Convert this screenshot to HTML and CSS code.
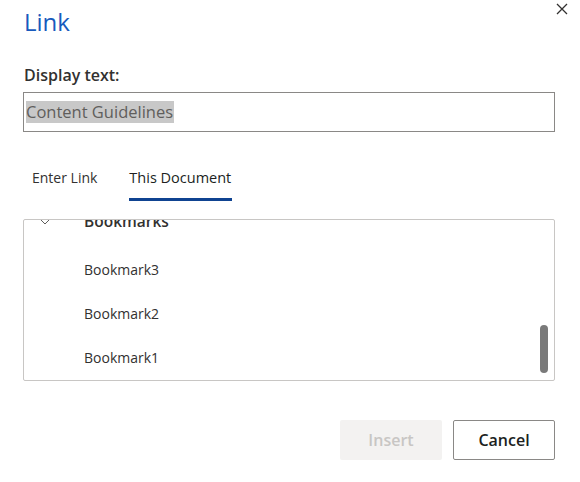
FILE: index.html
```html
<!DOCTYPE html>
<html>
<head>
<meta charset="utf-8">
<link rel="stylesheet" href="styles.css">
</head>
<body>
<div class="dialog">
  <div class="header">
    <h1 class="title">Link</h1>
    <button class="close" aria-label="Close">
      <svg width="12" height="12" viewBox="0 0 12 12"><path d="M1 1 L11 11 M11 1 L1 11" stroke="#323130" stroke-width="1.3" fill="none"/></svg>
    </button>
  </div>
  <label class="field-label">Display text:</label>
  <div class="input"><span class="selected">Content Guidelines</span></div>
  <div class="tabs">
    <div class="tab">Enter Link</div>
    <div class="tab active">This Document</div>
  </div>
  <div class="listbox">
    <div class="list">
      <div class="group-row">
        <svg class="chevron" width="10" height="6" viewBox="0 0 10 6"><path d="M0.5 0.5 L5 5 L9.5 0.5" stroke="#605e5c" stroke-width="1" fill="none"/></svg>
        <span class="group-name">Bookmarks</span>
      </div>
      <div class="item">Bookmark3</div>
      <div class="item">Bookmark2</div>
      <div class="item">Bookmark1</div>
    </div>
    <div class="thumb"></div>
  </div>
  <div class="actions">
    <button class="btn primary" disabled>Insert</button>
    <button class="btn secondary">Cancel</button>
  </div>
</div>
</body>
</html>
```
FILE: styles.css
```css
html, body {
  margin: 0;
  padding: 0;
  background: #ffffff;
}
body {
  width: 580px;
  height: 482px;
  overflow: hidden;
  font-family: "Open Sans", "Noto Sans", sans-serif;
  color: #323130;
}
.dialog {
  padding: 0 25px 0 23px;
  display: flex;
  flex-direction: column;
}
.header {
  display: flex;
  justify-content: space-between;
  align-items: flex-start;
}
.title {
  margin: 6px 0 0 1px;
  font-size: 24px;
  line-height: 32px;
  font-weight: 400;
  color: #185abd;
}
.close {
  margin: 3px -13px 0 0;
  padding: 0;
  border: 0;
  background: transparent;
  width: 12px;
  height: 12px;
  display: flex;
}
.field-label {
  margin: 27px 0 0 1px;
  font-size: 16px;
  line-height: 20px;
  font-weight: 600;
  color: #323130;
}
.input {
  margin-top: 7px;
  height: 38px;
  border: 1px solid #8a8886;
  display: flex;
  align-items: center;
  padding-left: 2px;
}
.selected {
  background: #c8c8c8;
  color: #605e5c;
  font-size: 16.5px;
  line-height: 22px;
  padding-right: 1px;
}
.tabs {
  margin-top: 36px;
  display: flex;
  gap: 32px;
  padding-left: 9px;
}
.tab {
  font-size: 14px;
  line-height: 20px;
  color: #323130;
  padding-bottom: 10px;
  border-bottom: 3px solid transparent;
}
.tab.active {
  border-bottom-color: #0f4391;
  color: #201f1e;
  font-size: 14.5px;
  padding-right: 1px;
}
.listbox {
  position: relative;
  margin-top: 18px;
  height: 160px;
  border: 1px solid #c8c6c4;
  border-radius: 2px;
  overflow: hidden;
}
.list {
  margin-top: -17px;
}
.group-row {
  height: 44px;
  display: flex;
  align-items: center;
}
.chevron {
  margin-left: 16px;
  margin-top: -7px;
}
.group-name {
  margin-left: 34px;
  margin-top: -8px;
  font-size: 15.5px;
  font-weight: 600;
  color: #323130;
}
.item {
  height: 44px;
  display: flex;
  align-items: center;
  padding-left: 60px;
  font-size: 14px;
  color: #323130;
}
.thumb {
  position: absolute;
  right: 6px;
  top: 105px;
  width: 8px;
  height: 48px;
  border-radius: 4px;
  background: #7a7a7a;
}
.actions {
  margin-top: 39px;
  display: flex;
  justify-content: flex-end;
  gap: 11px;
}
.btn {
  width: 102px;
  height: 40px;
  border-radius: 2px;
  font-family: "Open Sans", "Noto Sans", sans-serif;
  font-size: 16px;
  font-weight: 600;
  padding: 0;
}
.primary {
  background: #f3f2f1;
  border: 0;
  color: #c8c6c4;
}
.secondary {
  background: #ffffff;
  border: 1px solid #8a8886;
  color: #201f1e;
}
```
